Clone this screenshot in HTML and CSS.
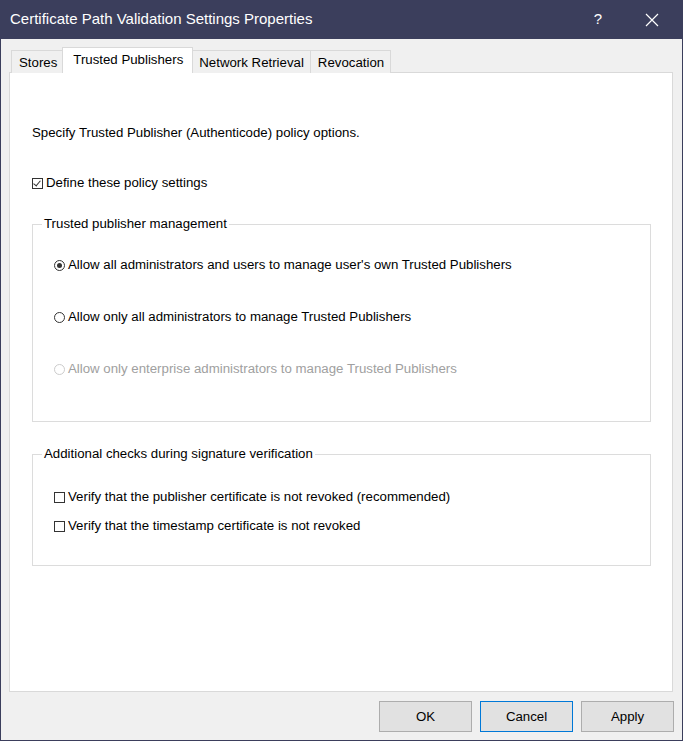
FILE: index.html
```html
<!doctype html>
<html>
<head>
<meta charset="utf-8">
<title>Certificate Path Validation Settings Properties</title>
<link rel="stylesheet" href="styles.css">
</head>
<body>
<div class="window">
  <div class="titlebar">
    <span class="title">Certificate Path Validation Settings Properties</span>
    <span class="help">?</span>
    <span class="close">
      <svg width="14" height="14" viewBox="0 0 14 14"><path d="M1 1 L13 13 M13 1 L1 13" stroke="#ffffff" stroke-width="1.2" fill="none"/></svg>
    </span>
  </div>
  <div class="body">
    <div class="tabs">
      <div class="tab">Stores</div>
      <div class="tab active">Trusted Publishers</div>
      <div class="tab">Network Retrieval</div>
      <div class="tab">Revocation</div>
    </div>
    <div class="panel">
      <p class="intro">Specify Trusted Publisher (Authenticode) policy options.</p>
      <div class="option define"><span class="box checked"></span>Define these policy settings</div>

      <fieldset class="group mgmt">
        <legend>Trusted publisher management</legend>
        <div class="option"><span class="radio selected"></span>Allow all administrators and users to manage user's own Trusted Publishers</div>
        <div class="option"><span class="radio"></span>Allow only all administrators to manage Trusted Publishers</div>
        <div class="option disabled"><span class="radio"></span>Allow only enterprise administrators to manage Trusted Publishers</div>
      </fieldset>

      <fieldset class="group checks">
        <legend>Additional checks during signature verification</legend>
        <div class="option"><span class="box"></span>Verify that the publisher certificate is not revoked (recommended)</div>
        <div class="option"><span class="box"></span>Verify that the timestamp certificate is not revoked</div>
      </fieldset>
    </div>
    <div class="buttons">
      <div class="btn">OK</div>
      <div class="btn default">Cancel</div>
      <div class="btn">Apply</div>
    </div>
  </div>
</div>
</body>
</html>
```

FILE: styles.css
```css
body {
	margin: 0;
	font-family: "Liberation Sans", Arial, sans-serif;
	font-size: 13.25px;
	color: #000;
}
.window {
	width: 683px;
	height: 741px;
	box-sizing: border-box;
	border: 1px solid #3b3e5c;
	border-top: none;
	background: #f0f0f0;
	display: flex;
	flex-direction: column;
}
.titlebar {
	height: 39px;
	background: #3b3e5c;
	color: #fff;
	display: flex;
	align-items: center;
	margin: 0 -1px;
}
.title {
	flex: 1;
	padding-left: 10px;
	font-size: 15px;
	padding-bottom: 2px;
}
.help {
	width: 46px;
	text-align: center;
	font-size: 15px;
	margin-right: 8px;
	padding-bottom: 2px;
}
.close {
	width: 46px;
	height: 39px;
	display: flex;
	align-items: center;
	justify-content: center;
	margin-right: 8px;
}
.body {
	flex: 1;
	display: flex;
	flex-direction: column;
	padding: 8px 9px 0 8px;
}
.tabs {
	display: flex;
	align-items: flex-end;
	padding-left: 2px;
	height: 26px;
	position: relative;
	z-index: 1;
	margin-bottom: -1px;
}
.tab {
	height: 23px;
	box-sizing: border-box;
	padding: 0 6px 0 7px;
	line-height: 24px;
	background: #f0f0f0;
	border: 1px solid #d9d9d9;
	border-bottom: none;
	margin-left: -1px;
}
.tab:first-child { margin-left: 0; }
.tab.active {
	height: 26px;
	background: #fff;
	line-height: 24px;
	padding: 0 9px 0 10px;
	margin-left: -2px;
	margin-right: -1px;
	border-color: #d9d9d9;
	position: relative;
	z-index: 2;
}
.panel {
	height: 620px;
	box-sizing: border-box;
	background: #fff;
	border: 1px solid #d9d9d9;
	padding: 0 20px 0 22px;
}
.intro {
	margin: 52px 0 0 0;
	line-height: 16px;
}
.option {
	display: flex;
	align-items: center;
	line-height: 16px;
}
.define { margin-top: 34px; }
.box {
	width: 9px;
	height: 9px;
	border: 1px solid #333;
	margin-right: 3px;
	position: relative;
}
.box.checked::after {
	content: "";
	position: absolute;
	left: 2px;
	top: 0px;
	width: 3px;
	height: 6px;
	border: solid #333;
	border-width: 0 1px 1px 0;
	transform: rotate(40deg);
}
.radio {
	width: 9px;
	height: 9px;
	border: 1px solid #333;
	border-radius: 50%;
	margin-right: 3px;
	position: relative;
}
.radio.selected::after {
	content: "";
	position: absolute;
	left: 2px;
	top: 2px;
	width: 5px;
	height: 5px;
	border-radius: 50%;
	background: #333;
}
.disabled { color: #a0a0a0; }
.disabled .radio { border-color: #cccccc; }
.group {
	margin: 0;
	padding: 0 0 0 21px;
	border: 1px solid #dcdcdc;
	width: 619px;
	box-sizing: border-box;
}
.group legend {
	padding: 0 2px;
	margin-left: -12px;
	line-height: 16px;
}
.mgmt {
	margin-top: 25px;
	height: 206px;
	padding-top: 25px;
}
.mgmt .option { margin-bottom: 36px; }
.checks {
	margin-top: 24px;
	height: 120px;
	padding-top: 27px;
}
.checks .option { margin-bottom: 13px; }
.buttons {
	display: flex;
	justify-content: flex-end;
	gap: 8px;
	padding-top: 9px;
	margin-right: -1px;
}
.btn {
	width: 93px;
	height: 31px;
	box-sizing: border-box;
	border: 1px solid #adadad;
	background: #e1e1e1;
	text-align: center;
	line-height: 29px;
}
.btn.default {
	border-color: #0078d7;
}
```
